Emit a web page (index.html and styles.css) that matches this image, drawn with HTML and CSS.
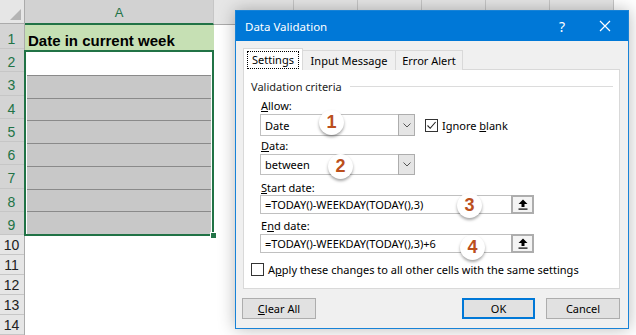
FILE: index.html
```html
<!DOCTYPE html>
<html lang="en">

<head>
  <meta charset="UTF-8">
  <title>Data Validation</title>
  <link rel="stylesheet" href="styles.css">
</head>

<body>
  <div class="sheet">
    <!-- row headers -->
    <div class="row-heads">
      <div class="corner"><i class="tri"></i></div>
      <div class="rh on r1">1</div>
      <div class="rh on rs">2</div>
      <div class="rh on rs">3</div>
      <div class="rh on rs">4</div>
      <div class="rh on rs">5</div>
      <div class="rh on rs">6</div>
      <div class="rh on rs">7</div>
      <div class="rh on rs">8</div>
      <div class="rh on rs">9</div>
      <div class="rh">10</div>
      <div class="rh">11</div>
      <div class="rh">12</div>
      <div class="rh">13</div>
      <div class="rh">14</div>
    </div>

    <!-- column A -->
    <div class="col-a">
      <div class="ch on">A</div>
      <div class="cell title">Date in current week</div>
      <div class="selection">
        <div class="sc active"></div>
        <div class="sc"></div>
        <div class="sc"></div>
        <div class="sc"></div>
        <div class="sc"></div>
        <div class="sc"></div>
        <div class="sc"></div>
        <div class="sc last"></div>
        <i class="handle"></i>
      </div>
    </div>

    <!-- rest of the columns -->
    <div class="col-rest">
      <div class="ch wide">B</div>
      <div class="ch">C</div>
      <div class="ch">D</div>
      <div class="ch">E</div>
      <div class="ch">F</div>
      <div class="ch">G</div>
    </div>
  </div>

  <div class="dlg">
    <div class="titlebar">
      <span class="caption">Data Validation</span>
      <span class="help">?</span>
      <svg class="close" width="12" height="12" viewBox="0 0 12 12">
        <path d="M1 1 L11 11 M11 1 L1 11" stroke="#fff" stroke-width="1.2" fill="none" />
      </svg>
    </div>

    <div class="dlg-body">
      <div class="tabs">
        <div class="tab active"><span class="focus">Settings</span></div>
        <div class="tab">Input Message</div>
        <div class="tab">Error Alert</div>
      </div>

      <div class="panel">
        <div class="group-title"><span>Validation criteria</span><i class="rule"></i></div>

        <div class="lbl"><u>A</u>llow:</div>
        <div class="line">
          <div class="combo tall">
            <span class="val">Date</span>
            <span class="drop"><svg width="8" height="5" viewBox="0 0 8 5"><path d="M0.5 0.5 L4 4 L7.5 0.5" stroke="#555" fill="none" /></svg></span>
          </div>
          <div class="check">
            <span class="box"><svg width="11" height="11" viewBox="0 0 11 11"><path d="M1.5 5.5 L4.2 8.3 L9.6 2" stroke="#222" stroke-width="1.1" fill="none" /></svg></span>
            <span>Ignore <u>b</u>lank</span>
          </div>
        </div>

        <div class="lbl l-data"><u>D</u>ata:</div>
        <div class="combo">
          <span class="val">between</span>
          <span class="drop"><svg width="8" height="5" viewBox="0 0 8 5"><path d="M0.5 0.5 L4 4 L7.5 0.5" stroke="#555" fill="none" /></svg></span>
        </div>

        <div class="lbl l-start"><u>S</u>tart date:</div>
        <div class="input">
          <span class="val">=TODAY()-WEEKDAY(TODAY(),3)</span>
          <span class="pick"><svg width="10" height="11" viewBox="0 0 10 11"><path d="M5 0.5 L9.5 5 L6.5 5 L6.5 8 L3.5 8 L3.5 5 L0.5 5 Z" fill="#000" /><rect x="0.5" y="9.5" width="9" height="1.2" fill="#000" /></svg></span>
        </div>

        <div class="lbl l-end">E<u>n</u>d date:</div>
        <div class="input">
          <span class="val">=TODAY()-WEEKDAY(TODAY(),3)+6</span>
          <span class="pick"><svg width="10" height="11" viewBox="0 0 10 11"><path d="M5 0.5 L9.5 5 L6.5 5 L6.5 8 L3.5 8 L3.5 5 L0.5 5 Z" fill="#000" /><rect x="0.5" y="9.5" width="9" height="1.2" fill="#000" /></svg></span>
        </div>

        <div class="check apply">
          <span class="box"></span>
          <span>A<u>p</u>ply these changes to all other cells with the same settings</span>
        </div>
      </div>

      <div class="buttons">
        <div class="btn"><u>C</u>lear All</div>
        <div class="spacer"></div>
        <div class="btn default">OK</div>
        <div class="btn">Cancel</div>
      </div>
    </div>

    <!-- numbered callouts -->
    <span class="badge b1">1</span>
    <span class="badge b2">2</span>
    <span class="badge b3">3</span>
    <span class="badge b4">4</span>
  </div>
</body>

</html>
```

FILE: styles.css
```css
/* Global */
* {
  box-sizing: border-box;
  margin: 0;
  padding: 0;
}

body {
  width: 636px;
  height: 335px;
  overflow: hidden;
  background: #fff;
  font-family: 'Noto Sans', 'Open Sans', sans-serif;
  position: relative;
}

/* Spreadsheet */
.sheet {
  display: flex;
  align-items: flex-start;
  height: 335px;
}

.row-heads {
  width: 25px;
  flex: none;
  background: #e6e6e6;
  border-right: 1px solid #ababab;
  height: 335px;
}

.corner {
  height: 24px;
  border-bottom: 1px solid #ababab;
  position: relative;
}

.corner .tri {
  position: absolute;
  right: 3px;
  bottom: 3px;
  width: 0;
  height: 0;
  border-left: 11px solid transparent;
  border-bottom: 11px solid #b4b4b4;
}

.rh {
  height: 20px;
  border-bottom: 1px solid #c6c6c6;
  font-family: 'Liberation Sans', Arial, sans-serif;
  font-size: 14px;
  color: #222;
  text-align: center;
  line-height: 20px;
  padding-right: 1px;
}

.rh.on {
  background: #d4d4d4;
  color: #217346;
}

.rh.r1 {
  height: 25px;
  line-height: 30px;
}

.rh.rs {
  height: 23.25px;
  line-height: 26px;
}

.col-a {
  width: 189px;
  flex: none;
}

.ch {
  height: 25px;
  background: #e6e6e6;
  border-bottom: 1px solid #ababab;
  border-right: 1px solid #c6c6c6;
  font-family: 'Liberation Sans', Arial, sans-serif;
  font-size: 13px;
  color: #444;
  text-align: center;
  line-height: 26px;
}

.ch.on {
  background: #d2d2d2;
  border-bottom: 2px solid #217346;
  color: #217346;
}

.col-rest {
  display: flex;
}

.col-rest .ch {
  width: 64px;
  flex: none;
  color: transparent;
}

.col-rest .ch.wide {
  width: 80px;
}

.cell.title {
  height: 25px;
  background: #c6e0b4;
  font-family: 'Liberation Sans', Arial, sans-serif;
  font-weight: bold;
  font-size: 15px;
  line-height: 31px;
  padding-left: 3px;
  color: #000;
  white-space: nowrap;
}

.selection {
  position: relative;
  height: 186px;
  border: 2px solid #217346;
  margin-left: -1px;
  background: #fff;
  padding: 1px;
}

.sc {
  height: 22.75px;
  background: #c8c8c8;
  border-bottom: 1px solid #8a8a8a;
}

.sc.active {
  background: #fff;
}

.sc.last {
  border-bottom: none;
  height: 21.75px;
}

.handle {
  position: absolute;
  right: -5px;
  bottom: -5px;
  width: 7px;
  height: 7px;
  background: #217346;
  border: 1px solid #fff;
}

/* Dialog window */
.dlg {
  position: absolute;
  left: 235px;
  top: 10px;
  width: 394px;
  height: 319px;
  border: 1px solid #1883d7;
  background: #f0f0f0;
  box-shadow: 0 0 16px rgba(0, 0, 0, 0.28);
  font-size: 11px;
  color: #000;
}

.titlebar {
  height: 30px;
  background: #0078d7;
  color: #fff;
  display: flex;
  align-items: center;
  padding-left: 9px;
}

.caption {
  flex: 1;
  font-size: 11.5px;
  padding-top: 1px;
}

.help {
  font-size: 14px;
  margin-right: 34px;
}

.close {
  margin-right: 17px;
}

.dlg-body {
  padding: 7px 8px 0 7px;
}

.tabs {
  display: flex;
  align-items: flex-end;
  height: 22px;
  position: relative;
  z-index: 1;
  margin-bottom: -1px;
  white-space: nowrap;
}

.tab {
  height: 20px;
  border: 1px solid #d9d9d9;
  border-bottom: none;
  border-left: none;
  background: #f0f0f0;
  line-height: 19px;
  text-align: center;
}

.tab:nth-child(2) {
  width: 93px;
}

.tab:nth-child(3) {
  width: 67px;
}

.tab.active {
  height: 22px;
  width: 60px;
  background: #fff;
  border-left: 1px solid #d9d9d9;
  padding: 2px 3px 0;
  line-height: 16px;
}

.focus {
  display: block;
  border: 1px dotted #000;
  padding: 0 2px;
}

.panel {
  height: 220px;
  background: #fff;
  border: 1px solid #d9d9d9;
  padding: 8px 6px 0 7px;
}

.group-title {
  display: flex;
  align-items: center;
  height: 16px;
  color: #1e1e1e;
  white-space: nowrap;
}

.rule {
  flex: 1;
  height: 1px;
  background: #dcdcdc;
  margin-left: 8px;
}

.lbl {
  margin: 4px 0 1px 10px;
  line-height: 15px;
}

.lbl.l-data {
  margin-top: 2px;
}

.lbl.l-start {
  margin-top: 5px;
  margin-bottom: 0;
}

.lbl.l-end {
  margin-top: 4px;
}

.line {
  display: flex;
  align-items: center;
}

.combo,
.input {
  margin-left: 9px;
  display: flex;
  align-items: stretch;
  width: 155px;
  height: 21px;
  border: 1px solid #c0c0c0;
  background: #fff;
}

.combo.tall {
  height: 22px;
}

.input {
  width: 274px;
  height: 19px;
}

.val {
  flex: 1;
  padding-left: 4px;
  display: flex;
  align-items: center;
  white-space: nowrap;
}

.drop,
.pick {
  width: 17px;
  flex: none;
  background: #e5e5e5;
  border: 1px solid #adadad;
  margin: -1px -1px -1px 0;
  display: flex;
  align-items: center;
  justify-content: center;
}

.pick {
  width: 23px;
  border-width: 2px;
  background: #f4f4f4;
}

.check {
  display: flex;
  align-items: center;
  white-space: nowrap;
}

.line .check {
  margin-left: 10px;
}

.box {
  width: 13px;
  height: 13px;
  border: 1px solid #333;
  background: #fff;
  margin-right: 4px;
  display: flex;
  align-items: center;
  justify-content: center;
}

.check.apply {
  margin-top: 9px;
}

.buttons {
  display: flex;
  margin-top: 9px;
}

.spacer {
  flex: 1;
}

.btn {
  width: 74px;
  height: 21px;
  border: 1px solid #adadad;
  background: #e1e1e1;
  text-align: center;
  line-height: 19px;
}

.btn.default {
  border: 2px solid #0078d7;
  line-height: 17px;
  width: 73px;
  margin-right: 11px;
}

.buttons .btn:first-child {
  margin-left: -1px;
}

/* Numbered callouts */
.badge {
  position: absolute;
  width: 25px;
  height: 25px;
  border-radius: 50%;
  background: #fff;
  box-shadow: 0 2px 3px rgba(0, 0, 0, 0.35);
  font-family: 'Liberation Sans', Arial, sans-serif;
  font-weight: bold;
  font-size: 18px;
  line-height: 25px;
  text-align: center;
  color: #bb4f1c;
}

.b1 {
  left: 83px;
  top: 99px;
}

.b2 {
  left: 92px;
  top: 143px;
}

.b3 {
  left: 221px;
  top: 182px;
}

.b4 {
  left: 224px;
  top: 224px;
}
```
